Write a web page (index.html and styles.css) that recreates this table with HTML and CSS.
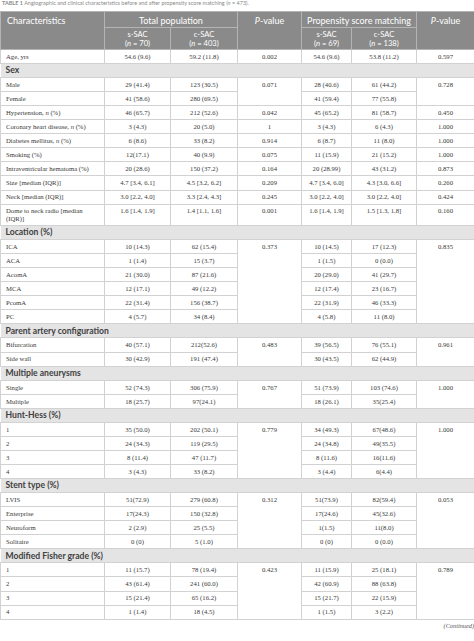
FILE: index.html
```html
<!DOCTYPE html>
<html>
<head>
<meta charset="utf-8">
<link rel="stylesheet" href="styles.css">
</head>
<body>
<div class="page">
<p class="caption"><b>TABLE 1</b> Angiographic and clinical characteristics before and after propensity score matching (<i>n</i> = 473).</p>
<table class="tbl">
<colgroup>
<col class="c-lab"><col class="c-a"><col class="c-b"><col class="c-p"><col class="c-d"><col class="c-e"><col class="c-q">
</colgroup>
<thead>
<tr class="h1">
<th rowspan="2" class="hl">Characteristics</th>
<th colspan="2">Total population</th>
<th rowspan="2"><i>P</i>-value</th>
<th colspan="2">Propensity score matching</th>
<th rowspan="2"><i>P</i>-value</th>
</tr>
<tr class="h2">
<th>s-SAC<br>(<i>n</i> = 70)</th>
<th>c-SAC<br>(<i>n</i> = 403)</th>
<th>s-SAC<br>(<i>n</i> = 69)</th>
<th>c-SAC<br>(<i>n</i> = 138)</th>
</tr>
</thead>
<tbody>
<tr><td class="lab">Age, yrs</td><td>54.6 (9.6)</td><td>59.2 (11.8)</td><td>0.002</td><td>54.6 (9.6)</td><td>53.8 (11.2)</td><td>0.597</td></tr>
<tr class="sec"><td colspan="7">Sex</td></tr>
<tr><td class="lab">Male</td><td>29 (41.4)</td><td>123 (30.5)</td><td rowspan="2">0.071</td><td>28 (40.6)</td><td>61 (44.2)</td><td rowspan="2">0.728</td></tr>
<tr><td class="lab">Female</td><td>41 (58.6)</td><td>280 (69.5)</td><td>41 (59.4)</td><td>77 (55.8)</td></tr>
<tr><td class="lab">Hypertension, <i>n</i> (%)</td><td>46 (65.7)</td><td>212 (52.6)</td><td>0.042</td><td>45 (65.2)</td><td>81 (58.7)</td><td>0.450</td></tr>
<tr><td class="lab">Coronary heart disease, <i>n</i> (%)</td><td>3 (4.3)</td><td>20 (5.0)</td><td>1</td><td>3 (4.3)</td><td>6 (4.3)</td><td>1.000</td></tr>
<tr><td class="lab">Diabetes mellitus, <i>n</i> (%)</td><td>6 (8.6)</td><td>33 (8.2)</td><td>0.914</td><td>6 (8.7)</td><td>11 (8.0)</td><td>1.000</td></tr>
<tr><td class="lab">Smoking (%)</td><td>12(17.1)</td><td>40 (9.9)</td><td>0.075</td><td>11 (15.9)</td><td>21 (15.2)</td><td>1.000</td></tr>
<tr><td class="lab">Intraventricular hematoma (%)</td><td>20 (28.6)</td><td>150 (37.2)</td><td>0.164</td><td>20 (28.99)</td><td>43 (31.2)</td><td>0.873</td></tr>
<tr><td class="lab">Size [median (IQR)]</td><td>4.7 [3.4, 6.1]</td><td>4.5 [3.2, 6.2]</td><td>0.209</td><td>4.7 [3.4, 6.0]</td><td>4.3 [3.0, 6.6]</td><td>0.260</td></tr>
<tr><td class="lab">Neck [median (IQR)]</td><td>3.0 [2.2, 4.0]</td><td>3.3 [2.4, 4.3]</td><td>0.245</td><td>3.0 [2.2, 4.0]</td><td>3.0 [2.2, 4.0]</td><td>0.424</td></tr>
<tr><td class="lab">Dome to neck radio [median (IQR)]</td><td>1.6 [1.4, 1.9]</td><td>1.4 [1.1, 1.6]</td><td>0.001</td><td>1.6 [1.4, 1.9]</td><td>1.5 [1.3, 1.8]</td><td>0.160</td></tr>
<tr class="sec"><td colspan="7">Location (%)</td></tr>
<tr><td class="lab">ICA</td><td>10 (14.3)</td><td>62 (15.4)</td><td rowspan="6">0.373</td><td>10 (14.5)</td><td>17 (12.3)</td><td rowspan="6">0.835</td></tr>
<tr><td class="lab">ACA</td><td>1 (1.4)</td><td>15 (3.7)</td><td>1 (1.5)</td><td>0 (0.0)</td></tr>
<tr><td class="lab">AcomA</td><td>21 (30.0)</td><td>87 (21.6)</td><td>20 (29.0)</td><td>41 (29.7)</td></tr>
<tr><td class="lab">MCA</td><td>12 (17.1)</td><td>49 (12.2)</td><td>12 (17.4)</td><td>23 (16.7)</td></tr>
<tr><td class="lab">PcomA</td><td>22 (31.4)</td><td>156 (38.7)</td><td>22 (31.9)</td><td>46 (33.3)</td></tr>
<tr><td class="lab">PC</td><td>4 (5.7)</td><td>34 (8.4)</td><td>4 (5.8)</td><td>11 (8.0)</td></tr>
<tr class="sec"><td colspan="7">Parent artery configuration</td></tr>
<tr><td class="lab">Bifurcation</td><td>40 (57.1)</td><td>212(52.6)</td><td rowspan="2">0.483</td><td>39 (56.5)</td><td>76 (55.1)</td><td rowspan="2">0.961</td></tr>
<tr><td class="lab">Side wall</td><td>30 (42.9)</td><td>191 (47.4)</td><td>30 (43.5)</td><td>62 (44.9)</td></tr>
<tr class="sec"><td colspan="7">Multiple aneurysms</td></tr>
<tr><td class="lab">Single</td><td>52 (74.3)</td><td>306 (75.9)</td><td rowspan="2">0.767</td><td>51 (73.9)</td><td>103 (74.6)</td><td rowspan="2">1.000</td></tr>
<tr><td class="lab">Multiple</td><td>18 (25.7)</td><td>97(24.1)</td><td>18 (26.1)</td><td>35(25.4)</td></tr>
<tr class="sec"><td colspan="7">Hunt-Hess (%)</td></tr>
<tr><td class="lab">1</td><td>35 (50.0)</td><td>202 (50.1)</td><td rowspan="4">0.779</td><td>34 (49.3)</td><td>67(48.6)</td><td rowspan="4">1.000</td></tr>
<tr><td class="lab">2</td><td>24 (34.3)</td><td>119 (29.5)</td><td>24 (34.8)</td><td>49(35.5)</td></tr>
<tr><td class="lab">3</td><td>8 (11.4)</td><td>47 (11.7)</td><td>8 (11.6)</td><td>16(11.6)</td></tr>
<tr><td class="lab">4</td><td>3 (4.3)</td><td>33 (8.2)</td><td>3 (4.4)</td><td>6(4.4)</td></tr>
<tr class="sec"><td colspan="7">Stent type (%)</td></tr>
<tr><td class="lab">LVIS</td><td>51(72.9)</td><td>279 (60.8)</td><td rowspan="4">0.312</td><td>51(73.9)</td><td>82(59.4)</td><td rowspan="4">0.053</td></tr>
<tr><td class="lab">Enterprise</td><td>17(24.3)</td><td>150 (32.8)</td><td>17(24.6)</td><td>45(32.6)</td></tr>
<tr><td class="lab">Neuroform</td><td>2 (2.9)</td><td>25 (5.5)</td><td>1(1.5)</td><td>11(8.0)</td></tr>
<tr><td class="lab">Solitaire</td><td>0 (0)</td><td>5 (1.0)</td><td>0 (0)</td><td>0 (0.0)</td></tr>
<tr class="sec"><td colspan="7">Modified Fisher grade (%)</td></tr>
<tr><td class="lab">1</td><td>11 (15.7)</td><td>78 (19.4)</td><td rowspan="4">0.423</td><td>11 (15.9)</td><td>25 (18.1)</td><td rowspan="4">0.789</td></tr>
<tr><td class="lab">2</td><td>43 (61.4)</td><td>241 (60.0)</td><td>42 (60.9)</td><td>88 (63.8)</td></tr>
<tr><td class="lab">3</td><td>15 (21.4)</td><td>65 (16.2)</td><td>15 (21.7)</td><td>22 (15.9)</td></tr>
<tr><td class="lab">4</td><td>1 (1.4)</td><td>18 (4.5)</td><td>1 (1.5)</td><td>3 (2.2)</td></tr>
</tbody>
</table>
<p class="cont"><i>(Continued)</i></p>
</div>
</body>
</html>
```

FILE: styles.css
```css
html, body {
  margin: 0;
  padding: 0;
  background: #ffffff;
}
.page {
  width: 474px;
  overflow: hidden;
}
.caption {
  margin: 0;
  height: 11px;
  padding: 0 0 0 2px;
  font: 5.5px/7px "Lato", "Liberation Sans", sans-serif;
  color: #8a8a8a;
  white-space: nowrap;
}
.tbl {
  width: 474px;
  border-collapse: collapse;
  table-layout: fixed;
}
.c-lab { width: 104px; }
.c-a { width: 66px; }
.c-b { width: 67px; }
.c-p { width: 64px; }
.c-d { width: 50px; }
.c-e { width: 65px; }
.c-q { width: 58px; }
.tbl th {
  background: #8a8a8a;
  color: #ffffff;
  font-family: "Lato", "Liberation Sans", sans-serif;
  font-weight: 400;
  border: 1px solid #b4b4b4;
  text-align: center;
  vertical-align: top;
}
.h1 th {
  font-size: 9px;
  line-height: 9px;
  padding: 4px 3px 2px;
}
.h1 th.hl {
  text-align: left;
  padding-left: 6px;
}
.h2 th {
  font-size: 7.6px;
  line-height: 8.5px;
  padding: 2px 2px 2px;
}
.tbl td {
  border: 1px solid #d2d2d2;
  padding: 2.9px 3px 2.75px;
  font: 6.7px/7.4px "Liberation Serif", serif;
  color: #3a3a3a;
  text-align: center;
  vertical-align: top;
}
.tbl td.lab {
  text-align: left;
  padding-left: 5px;
}
.sec td {
  background: #e4e4e4;
  font: 700 8.6px/9px "Lato", "Liberation Sans", sans-serif;
  color: #404040;
  text-align: left;
  padding: 2.3px 5px 1.8px;
  border-left: none;
  border-right: none;
}
.cont {
  margin: 2px 0 0 0;
  text-align: right;
  font: 6.3px/8px "Liberation Serif", serif;
  color: #555555;
}
```
